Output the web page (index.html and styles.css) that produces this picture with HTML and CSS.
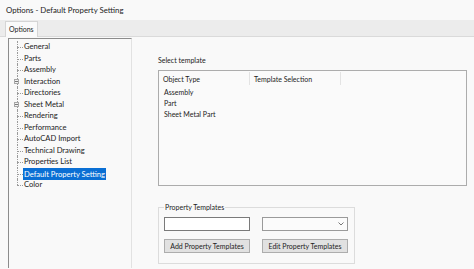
FILE: index.html
```html
<!DOCTYPE html>
<html>
<head>
<meta charset="utf-8">
<link rel="stylesheet" href="styles.css">
</head>
<body>
<div class="title">Options - Default Property Setting</div>
<div class="tabbar"><div class="tab">Options</div></div>
<div class="content">
  <div class="tree">
    <ul class="nodes">
      <li>General</li>
      <li>Parts</li>
      <li>Assembly</li>
      <li class="exp">Interaction</li>
      <li>Directories</li>
      <li class="exp">Sheet Metal</li>
      <li>Rendering</li>
      <li>Performance</li>
      <li>AutoCAD Import</li>
      <li>Technical Drawing</li>
      <li>Properties List</li>
      <li class="sel"><span>Default Property Setting</span></li>
      <li class="last">Color</li>
    </ul>
  </div>
  <div class="right">
    <div class="label">Select template</div>
    <div class="listbox">
      <div class="lhead">
        <div class="col c1">Object Type</div>
        <div class="col c2">Template Selection</div>
        <div class="col c3"></div>
      </div>
      <div class="row">Assembly</div>
      <div class="row">Part</div>
      <div class="row">Sheet Metal Part</div>
    </div>
    <fieldset class="group">
      <legend>Property Templates</legend>
      <div class="grid">
        <div class="input"></div>
        <div class="input combo"><svg width="6" height="4" viewBox="0 0 6 4"><path d="M0.5 0.5 L3 3 L5.5 0.5" fill="none" stroke="#555" stroke-width="0.8"/></svg></div>
        <div class="btn">Add Property Templates</div>
        <div class="btn">Edit Property Templates</div>
      </div>
    </fieldset>
  </div>
</div>
</body>
</html>
```
FILE: styles.css
```css
html, body {
  margin: 0;
  padding: 0;
  background: #f9f9f9;
  width: 474px;
  height: 269px;
  overflow: hidden;
  font-family: "Segoe UI", Lato, "Open Sans", sans-serif;
  font-size: 7.6px;
  color: #1c1c1c;
}
.title {
  height: 20px;
  line-height: 20px;
  padding-left: 6px;
  font-size: 7.8px;
  color: #222;
}
.tabbar {
  height: 17px;
  background: #ececec;
  border-bottom: 1px solid #dadada;
  box-sizing: border-box;
  display: flex;
  align-items: flex-end;
  padding-left: 5px;
}
.tab {
  width: 33px;
  height: 16px;
  box-sizing: border-box;
  background: #fafafa;
  border: 1px solid #d5d5d5;
  border-bottom: none;
  margin-bottom: -1px;
  line-height: 14px;
  padding-left: 3px;
  font-size: 7px;
}
.content {
  display: flex;
  padding-left: 8px;
  padding-top: 1px;
  height: 231px;
  box-sizing: border-box;
}
.tree {
  width: 124px;
  box-sizing: border-box;
  border-left: 1px solid #8c8c8c;
  border-top: 1px solid #8c8c8c;
  border-right: 1px solid #e2e2e2;
  padding-top: 2px;
}
.nodes {
  list-style: none;
  margin: 0;
  padding: 0 0 0 8px;
}
.nodes li {
  position: relative;
  height: 11.5px;
  line-height: 11.5px;
  padding-left: 7px;
  white-space: nowrap;
}
.nodes li::before {
  content: "";
  position: absolute;
  left: 0;
  top: 6px;
  width: 6px;
  border-top: 1px dotted #9a9a9a;
}
.nodes li::after {
  content: "";
  position: absolute;
  left: 0;
  top: 0;
  height: 100%;
  border-left: 1px dotted #9a9a9a;
}
.nodes li.last::after {
  height: 6px;
}
.nodes li.exp::before {
  z-index: 1;
  left: -3px;
  top: 3px;
  width: 5px;
  height: 5px;
  border: 1px solid #a8a8a8;
  background: #f2f2f2 linear-gradient(#7a7a7a, #7a7a7a) center / 3px 1px no-repeat;
  box-sizing: border-box;
}
.nodes li.sel span {
  background: #0a6fd4;
  color: #fff;
  display: inline-block;
  line-height: 12px;
  padding: 0 1px;
  margin-left: -1px;
}
.right {
  flex: 1;
  padding-left: 26px;
  padding-right: 7px;
  display: flex;
  flex-direction: column;
  font-size: 7px;
}
.label {
  margin-top: 17px;
  height: 11px;
  line-height: 11px;
}
.listbox {
  margin-top: 4px;
  height: 116px;
  box-sizing: border-box;
  border: 1px solid #acacac;
  background: #fafafa;
}
.lhead {
  display: flex;
  height: 15px;
}
.col {
  padding-left: 4px;
  border-right: 1px solid #e3e3e3;
  margin: 1px 0;
  line-height: 14px;
}
.c1 { width: 86px; }
.c2 { width: 86px; }
.c3 { border-right: none; }
.row {
  padding-left: 5px;
  height: 11px;
  line-height: 11px;
}
.lhead + .row { margin-top: 1px; }
.group {
  margin: 17px 0 0 0;
  width: 197px;
  height: 61px;
  box-sizing: border-box;
  border: 1px solid #dcdcdc;
  padding: 5px 5px 0 5px;
  min-width: 0;
}
.group legend {
  padding: 0 1px;
  margin-left: 0;
  line-height: 9px;
}
.grid {
  display: grid;
  grid-template-columns: 86px 86px;
  column-gap: 12px;
  row-gap: 8px;
}
.input {
  height: 14px;
  box-sizing: border-box;
  border: 1px solid #7a7a7a;
  background: #fff;
}
.combo {
  display: flex;
  align-items: center;
  justify-content: flex-end;
  padding-right: 3px;
  border-color: #9a9a9a;
  background: #fbfbfb;
}
.btn {
  height: 14px;
  box-sizing: border-box;
  border: 1px solid #adadad;
  background: #e1e1e1;
  line-height: 12px;
  text-align: center;
  white-space: nowrap;
}
```
